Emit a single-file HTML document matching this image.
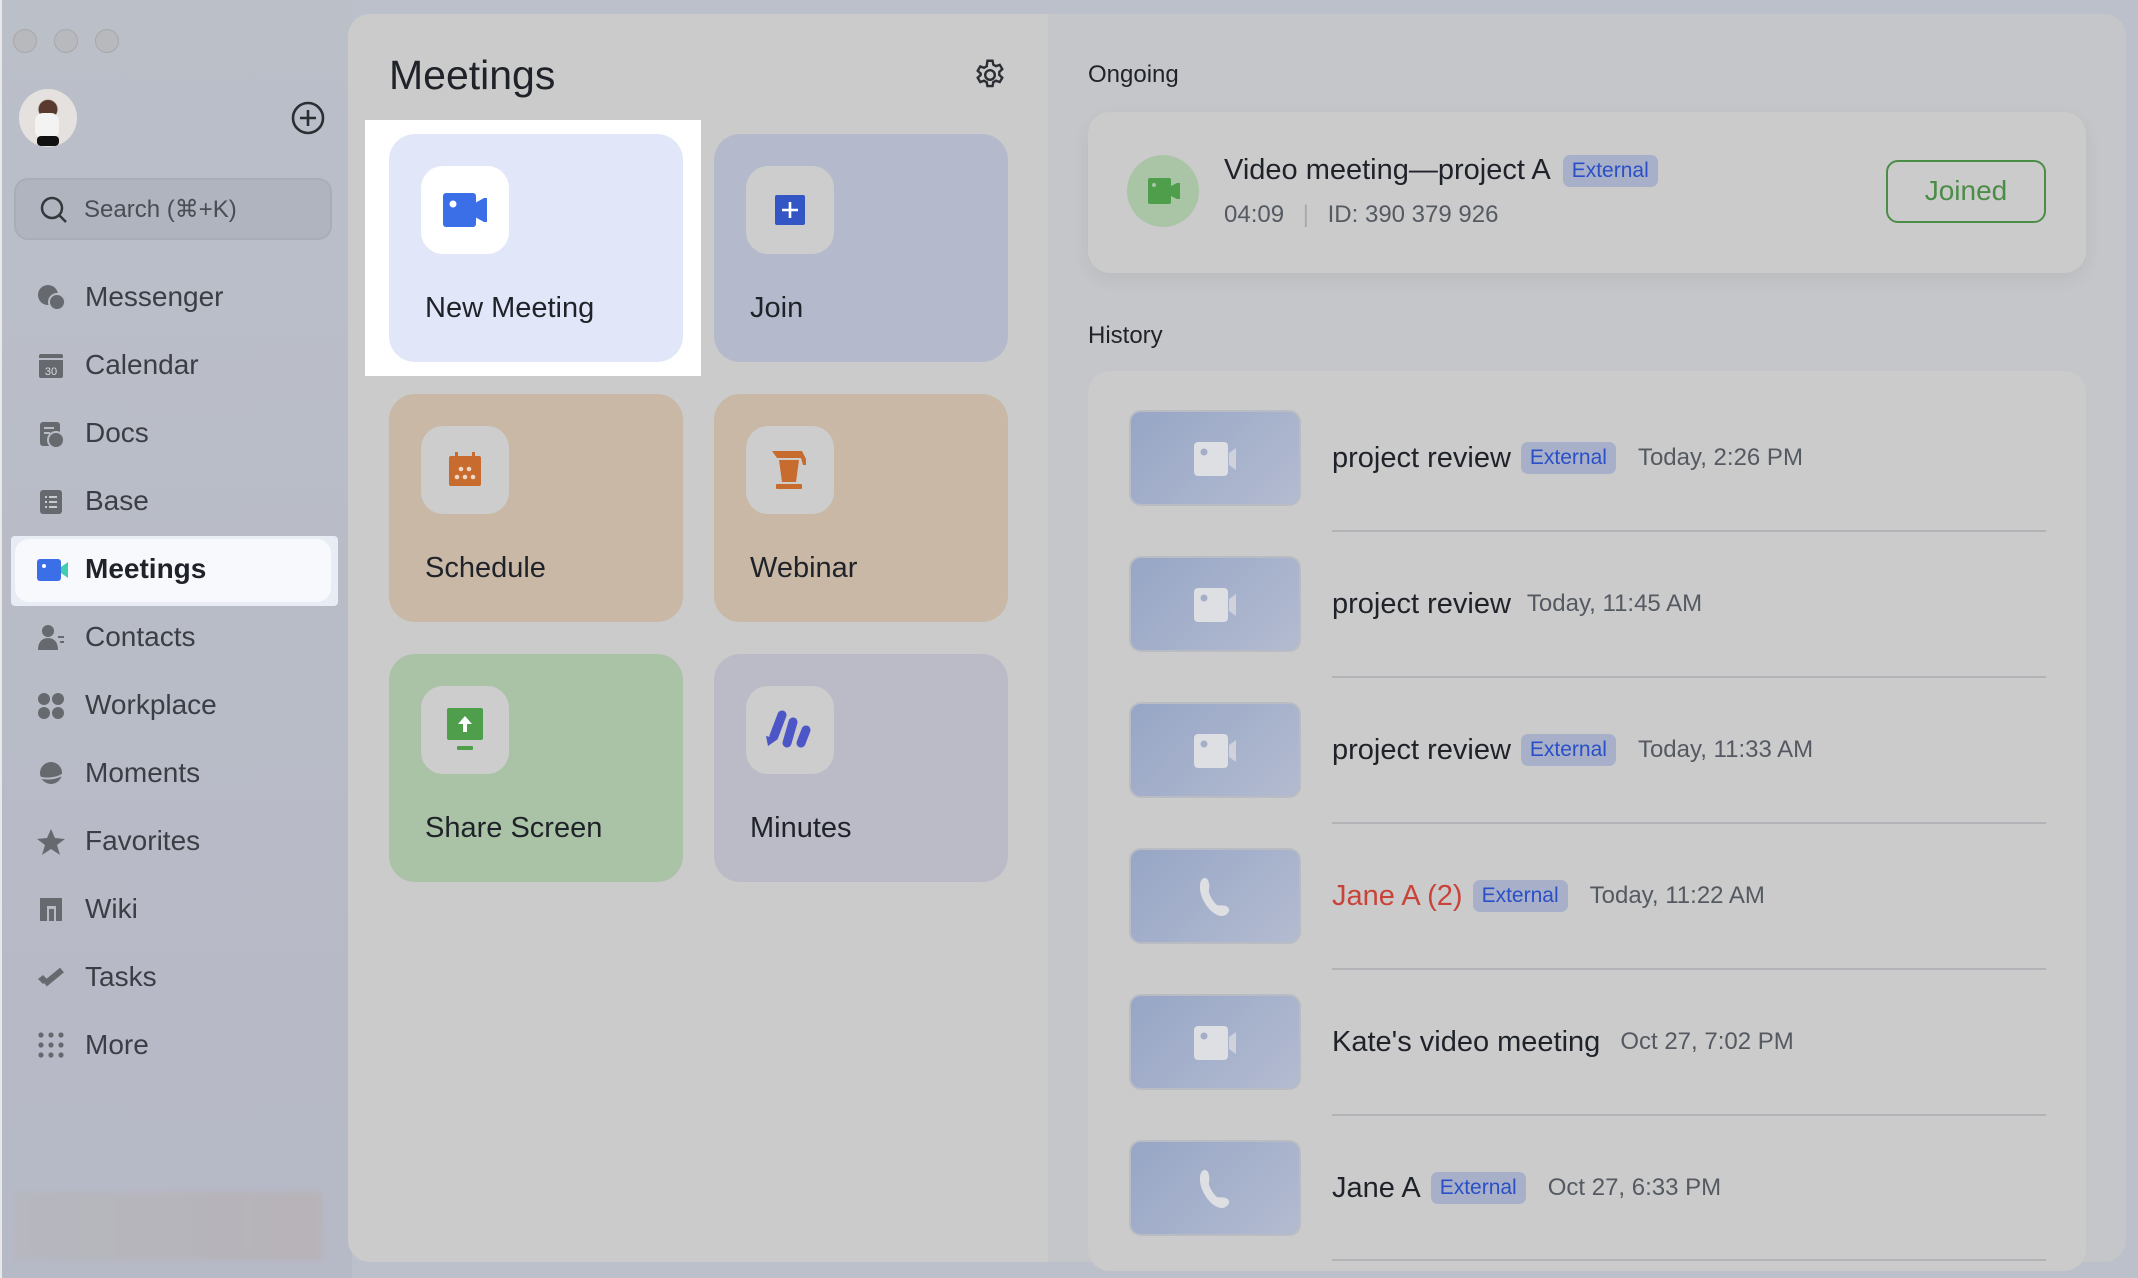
<!DOCTYPE html>
<html><head><meta charset="utf-8"><style>
*{margin:0;padding:0;box-sizing:border-box}
body{width:2138px;height:1278px;overflow:hidden;background:#bcc0cb;font-family:"Liberation Sans",sans-serif;position:relative;color:#1f2329}
.a{position:absolute}
#side{left:0;top:0;width:352px;height:1278px;background:linear-gradient(180deg,#bbbfc8,#b6b9c6);border-left:2px solid #e8e8ea}
.tl{width:24px;height:24px;border-radius:50%;background:#b8b9bd;border:1px solid #a6a8ae;top:29px}
.nav{left:83px;font-size:28px;color:#3b3e44;line-height:32px}
.ni{left:34px;width:30px;height:30px}
#mid{left:348px;top:14px;width:700px;height:1248px;background:#cbcbcb;border-radius:22px 0 0 22px}
#right{left:1048px;top:14px;width:1078px;height:1248px;background:#c5c6c9;border-radius:0 22px 22px 0}
.card{border-radius:26px;width:294px;height:228px}
.tile{width:88px;height:88px;border-radius:22px;background:#cdcdcd;left:32px;top:32px}
.lab{left:36px;top:158px;font-size:29px;color:#1f2329;white-space:nowrap}
.ext{display:inline-block;background:#a7b0c8;color:#2a4fc7;font-size:21px;line-height:26px;padding:3px 9px;border-radius:7px;margin:0 6px 0 10px}
.row{left:1129px;width:920px;height:96px}
.thumb{left:0;top:0;width:172px;height:96px;border-radius:12px;background:linear-gradient(135deg,#97a6c6,#b3bbd0);border:2px solid #b9bcc3;overflow:hidden}
.rt{left:203px;top:0;height:96px;display:flex;align-items:center;font-size:29px;white-space:nowrap;color:#1f2329}
.tm{color:#555a62;font-size:24px;margin-left:16px}
.div{left:1332px;width:714px;height:2px;background:#b2b3b6}
</style></head><body>
<div id="side" class="a">
<div class="a tl" style="left:11px"></div><div class="a tl" style="left:52px"></div><div class="a tl" style="left:93px"></div>
<div class="a" style="left:17px;top:89px;width:58px;height:58px;border-radius:50%;background:radial-gradient(circle at 50% 35%,#5a3a2e 0 9px,#e4e1de 10px);overflow:hidden"><div class="a" style="left:16px;top:24px;width:24px;height:26px;background:#f3f3f3;border-radius:8px"></div><div class="a" style="left:18px;top:47px;width:22px;height:10px;background:#111;border-radius:4px"></div></div>
<svg class="a" style="left:288px;top:100px" width="36" height="36" viewBox="0 0 36 36"><circle cx="18" cy="18" r="15" fill="none" stroke="#2b2e33" stroke-width="2.6"/><path d="M18 10v16M10 18h16" stroke="#2b2e33" stroke-width="2.6"/></svg>
<div class="a" style="left:12px;top:178px;width:318px;height:62px;border-radius:14px;background:#b0b4bf;border:2px solid #a9adb8"></div>
<svg class="a" style="left:37px;top:195px" width="30" height="30" viewBox="0 0 30 30"><circle cx="13" cy="13" r="10" fill="none" stroke="#34373c" stroke-width="2.5"/><path d="M20 20l7 7" stroke="#34373c" stroke-width="2.5"/></svg>
<div class="a" style="left:82px;top:195px;font-size:24px;color:#4a4d53">Search (⌘+K)</div>

<div class="a" style="left:9px;top:536px;width:327px;height:70px;background:#e8ecf5;border-radius:4px"></div>
<div class="a" style="left:13px;top:539px;width:316px;height:63px;background:#f8f9fc;border-radius:14px"></div>

<svg class="a ni" style="top:282px" viewBox="0 0 30 30"><circle cx="12" cy="13" r="10" fill="#66696e"/><circle cx="21" cy="20" r="8" fill="#66696e" stroke="#b8bcc6" stroke-width="2"/></svg>
<div class="a nav" style="top:281px">Messenger</div>
<svg class="a ni" style="top:351px" viewBox="0 0 30 30"><rect x="3" y="3" width="24" height="24" rx="2" fill="#66696e"/><rect x="3" y="7" width="24" height="2" fill="#b8bcc6"/><text x="15" y="24" font-size="11" fill="#d8dadf" text-anchor="middle" font-family="Liberation Sans">30</text></svg>
<div class="a nav" style="top:349px">Calendar</div>
<svg class="a ni" style="top:419px" viewBox="0 0 30 30"><rect x="4" y="3" width="20" height="24" rx="3" fill="#66696e"/><circle cx="20" cy="21" r="8" fill="#66696e" stroke="#b8bcc6" stroke-width="2"/><path d="M8 9h10M8 14h6" stroke="#b8bcc6" stroke-width="2"/></svg>
<div class="a nav" style="top:417px">Docs</div>
<svg class="a ni" style="top:487px" viewBox="0 0 30 30"><rect x="4" y="3" width="22" height="24" rx="3" fill="#66696e"/><path d="M9 10h2M13 10h8M9 15h2M13 15h8M9 20h2M13 20h8" stroke="#c8cad0" stroke-width="2"/></svg>
<div class="a nav" style="top:485px">Base</div>
<svg class="a ni" style="left:33px;top:555px;width:36px" viewBox="0 0 36 30"><rect x="2" y="4" width="24" height="22" rx="3" fill="#3b6fe8"/><circle cx="9" cy="11" r="2" fill="#fff"/><path d="M26 12l7-5v16l-7-5z" fill="#3fcfb0"/></svg>
<div class="a nav" style="top:553px;color:#1f2329;font-weight:bold">Meetings</div>
<svg class="a ni" style="top:623px" viewBox="0 0 30 30"><circle cx="12" cy="8" r="6" fill="#66696e"/><path d="M2 27c0-8 4-12 10-12s10 4 10 12z" fill="#66696e"/><path d="M22 14h6M24 19h4" stroke="#66696e" stroke-width="2"/></svg>
<div class="a nav" style="top:621px">Contacts</div>
<svg class="a ni" style="top:691px" viewBox="0 0 30 30"><ellipse cx="8" cy="8" rx="6" ry="6" fill="#66696e"/><ellipse cx="22" cy="8" rx="6" ry="6" fill="#66696e"/><ellipse cx="8" cy="22" rx="6" ry="6" fill="#66696e"/><ellipse cx="22" cy="22" rx="6" ry="6" fill="#66696e"/></svg>
<div class="a nav" style="top:689px">Workplace</div>
<svg class="a ni" style="top:759px" viewBox="0 0 30 30"><circle cx="15" cy="14" r="11" fill="#66696e"/><path d="M1 16c4 6 24 4 28-3" stroke="#b8bcc6" stroke-width="2" fill="none"/></svg>
<div class="a nav" style="top:757px">Moments</div>
<svg class="a ni" style="top:827px" viewBox="0 0 30 30"><path d="M15 2l4 9 10 1-8 6 3 10-9-6-9 6 3-10-8-6 10-1z" fill="#66696e"/></svg>
<div class="a nav" style="top:825px">Favorites</div>
<svg class="a ni" style="top:894px" viewBox="0 0 30 30"><path d="M4 4h22v23h-6V12H11v15H4z" fill="#66696e"/><rect x="13" y="15" width="5" height="12" fill="#66696e"/></svg>
<div class="a nav" style="top:893px">Wiki</div>
<svg class="a ni" style="top:962px" viewBox="0 0 30 30"><path d="M2 17l5-4 5 5-5 4z" fill="#66696e"/><path d="M9 22L26 8" stroke="#66696e" stroke-width="6"/></svg>
<div class="a nav" style="top:961px">Tasks</div>
<svg class="a ni" style="top:1030px" viewBox="0 0 30 30"><g fill="#66696e"><circle cx="5" cy="5" r="2.6"/><circle cx="15" cy="5" r="2.6"/><circle cx="25" cy="5" r="2.6"/><circle cx="5" cy="15" r="2.6"/><circle cx="15" cy="15" r="2.6"/><circle cx="25" cy="15" r="2.6"/><circle cx="5" cy="25" r="2.6"/><circle cx="15" cy="25" r="2.6"/><circle cx="25" cy="25" r="2.6"/></g></svg>
<div class="a nav" style="top:1029px">More</div>
<div class="a" style="left:14px;top:1192px;width:306px;height:68px;background:linear-gradient(90deg,#b6b7bf,#b7b3b8);filter:blur(2px)"></div>
</div>

<div id="mid" class="a">
<div class="a" style="left:41px;top:38px;font-size:41px;color:#1f2329">Meetings</div>
<svg class="a" style="left:624px;top:43px" width="36" height="36" viewBox="0 0 24 24"><path fill="none" stroke="#2b2e33" stroke-width="1.6" d="M10.3 2.5h3.4l.5 2.6 1.8 1 2.5-.9 1.7 2.9-2 1.8v2.1l2 1.8-1.7 2.9-2.5-.9-1.8 1-.5 2.6h-3.4l-.5-2.6-1.8-1-2.5.9-1.7-2.9 2-1.8V11l-2-1.8 1.7-2.9 2.5.9 1.8-1z"/><circle cx="12" cy="12" r="3.2" fill="none" stroke="#2b2e33" stroke-width="1.6"/></svg>
<div class="a" style="left:17px;top:106px;width:336px;height:256px;background:#fff"></div>
<div class="a card" style="left:41px;top:120px;background:#e1e7f9"><div class="a tile" style="background:#fff"><svg class="a" style="left:21px;top:26px" width="46" height="36" viewBox="0 0 46 36"><rect x="1" y="1" width="33" height="34" rx="3" fill="#3b6fe8"/><circle cx="11" cy="12" r="3.5" fill="#fff"/><path d="M33 11l9-5h3v24h-3l-9-5z" fill="#3b6fe8"/></svg></div><div class="a lab">New Meeting</div></div>
<div class="a card" style="left:366px;top:120px;background:#b4bacb"><div class="a tile"><svg class="a" style="left:26px;top:26px" width="36" height="36" viewBox="0 0 36 36"><rect x="3" y="3" width="30" height="30" rx="2" fill="#3356c4"/><path d="M18 10v16M10 18h16" stroke="#fff" stroke-width="2.6"/></svg></div><div class="a lab">Join</div></div>
<div class="a card" style="left:41px;top:380px;background:#c8b8a5"><div class="a tile"><svg class="a" style="left:24px;top:24px" width="40" height="40" viewBox="0 0 40 40"><rect x="4" y="6" width="32" height="30" rx="2" fill="#c76b2e"/><rect x="10" y="2" width="3" height="6" fill="#c76b2e"/><rect x="27" y="2" width="3" height="6" fill="#c76b2e"/><g fill="#f0d8c8"><circle cx="16" cy="19" r="2.3"/><circle cx="24" cy="19" r="2.3"/><circle cx="12" cy="27" r="2.3"/><circle cx="20" cy="27" r="2.3"/><circle cx="28" cy="27" r="2.3"/></g></svg></div><div class="a lab">Schedule</div></div>
<div class="a card" style="left:366px;top:380px;background:#c8b8a5"><div class="a tile"><svg class="a" style="left:24px;top:22px" width="40" height="44" viewBox="0 0 40 44"><path d="M2 3h30l4 8v6h-3l-2-7H7z" fill="#c76b2e"/><path d="M9 12h20l-3 22h-14z" fill="#c76b2e"/><rect x="6" y="36" width="26" height="5" rx="1" fill="#c76b2e"/></svg></div><div class="a lab">Webinar</div></div>
<div class="a card" style="left:41px;top:640px;background:#aac3a6"><div class="a tile"><svg class="a" style="left:24px;top:20px" width="40" height="48" viewBox="0 0 40 48"><rect x="2" y="2" width="36" height="32" rx="2" fill="#4e9e4c"/><path d="M20 10l-7 8h5v8h4v-8h5z" fill="#fff"/><rect x="12" y="40" width="16" height="4" rx="1" fill="#4e9e4c"/></svg></div><div class="a lab">Share Screen</div></div>
<div class="a card" style="left:366px;top:640px;background:#bbbbc7"><div class="a tile"><svg class="a" style="left:18px;top:24px" width="54" height="40" viewBox="0 0 54 40"><g stroke="#4c56c6" stroke-width="9" stroke-linecap="round" fill="none"><path d="M18 5L10 26"/><path d="M29 12L23 33"/><path d="M42 20L37 33"/></g><path d="M2 26l12 3-10 7z" fill="#4c56c6"/></svg></div><div class="a lab">Minutes</div></div>
</div>

<div id="right" class="a">
<div class="a" style="left:40px;top:47px;font-size:24px;color:#1f2329">Ongoing</div>
<div class="a" style="left:40px;top:98px;width:998px;height:161px;background:#cbcbcb;border-radius:22px;box-shadow:0 6px 18px rgba(0,0,0,.06)"></div>
<div class="a" style="left:79px;top:141px;width:72px;height:72px;border-radius:50%;background:#a9c5a6"></div>
<svg class="a" style="left:99px;top:163px" width="34" height="28" viewBox="0 0 34 28"><rect x="1" y="1" width="23" height="26" rx="2" fill="#4e9e4c"/><circle cx="7" cy="8" r="2" fill="#a9c5a6"/><path d="M24 9l6-3h3v16h-3l-6-3z" fill="#4e9e4c"/></svg>
<div class="a" style="left:176px;top:140px;font-size:29px;white-space:nowrap;display:flex;align-items:center">Video meeting—project A<span class="ext" style="margin-left:12px">External</span></div>
<div class="a" style="left:176px;top:187px;font-size:24px;color:#555a62;white-space:nowrap">04:09 <span style="color:#a9aaad;margin:0 12px">|</span> ID: 390 379 926</div>
<div class="a" style="left:838px;top:146px;width:160px;height:63px;border:2.5px solid #4b8c47;border-radius:12px;color:#4b8c47;font-size:28px;text-align:center;line-height:58px">Joined</div>
<div class="a" style="left:40px;top:308px;font-size:24px;color:#1f2329">History</div>
<div class="a" style="left:40px;top:357px;width:998px;height:900px;background:#cbcbcb;border-radius:22px"></div>
</div>

<div class="a row" style="top:410px"><div class="a thumb"><svg class="a" style="left:60px;top:28px" width="50" height="38" viewBox="0 0 50 38"><rect x="3" y="2" width="34" height="34" rx="4" fill="#dedfe3"/><circle cx="13" cy="12" r="3.5" fill="#a4aec8"/><path d="M38 13l7-5v22l-7-5z" fill="#cfd2da"/></svg></div><div class="a rt">project review<span class="ext">External</span><span class="tm">Today, 2:26 PM</span></div></div>
<div class="a div" style="top:530px"></div>
<div class="a row" style="top:556px"><div class="a thumb"><svg class="a" style="left:60px;top:28px" width="50" height="38" viewBox="0 0 50 38"><rect x="3" y="2" width="34" height="34" rx="4" fill="#dedfe3"/><circle cx="13" cy="12" r="3.5" fill="#a4aec8"/><path d="M38 13l7-5v22l-7-5z" fill="#cfd2da"/></svg></div><div class="a rt">project review<span class="tm">Today, 11:45 AM</span></div></div>
<div class="a div" style="top:676px"></div>
<div class="a row" style="top:702px"><div class="a thumb"><svg class="a" style="left:60px;top:28px" width="50" height="38" viewBox="0 0 50 38"><rect x="3" y="2" width="34" height="34" rx="4" fill="#dedfe3"/><circle cx="13" cy="12" r="3.5" fill="#a4aec8"/><path d="M38 13l7-5v22l-7-5z" fill="#cfd2da"/></svg></div><div class="a rt">project review<span class="ext">External</span><span class="tm">Today, 11:33 AM</span></div></div>
<div class="a div" style="top:822px"></div>
<div class="a row" style="top:848px"><div class="a thumb"><svg class="a" style="left:66px;top:26px" width="40" height="44" viewBox="0 0 40 44"><path d="M8 2c4 0 5 8 4 12-1 3 4 12 8 15 3 1 10-1 12 4 1 3-3 7-7 7C14 40 2 22 3 10 3 5 5 2 8 2z" fill="#dedfe3"/></svg></div><div class="a rt"><span style="color:#c8443a">Jane A (2)</span><span class="ext">External</span><span class="tm">Today, 11:22 AM</span></div></div>
<div class="a div" style="top:968px"></div>
<div class="a row" style="top:994px"><div class="a thumb"><svg class="a" style="left:60px;top:28px" width="50" height="38" viewBox="0 0 50 38"><rect x="3" y="2" width="34" height="34" rx="4" fill="#dedfe3"/><circle cx="13" cy="12" r="3.5" fill="#a4aec8"/><path d="M38 13l7-5v22l-7-5z" fill="#cfd2da"/></svg></div><div class="a rt">Kate's video meeting<span class="tm" style="margin-left:20px">Oct 27, 7:02 PM</span></div></div>
<div class="a div" style="top:1114px"></div>
<div class="a row" style="top:1140px"><div class="a thumb"><svg class="a" style="left:66px;top:26px" width="40" height="44" viewBox="0 0 40 44"><path d="M8 2c4 0 5 8 4 12-1 3 4 12 8 15 3 1 10-1 12 4 1 3-3 7-7 7C14 40 2 22 3 10 3 5 5 2 8 2z" fill="#dedfe3"/></svg></div><div class="a rt">Jane A<span class="ext">External</span><span class="tm">Oct 27, 6:33 PM</span></div></div>
<div class="a div" style="top:1259px"></div>
</body></html>
